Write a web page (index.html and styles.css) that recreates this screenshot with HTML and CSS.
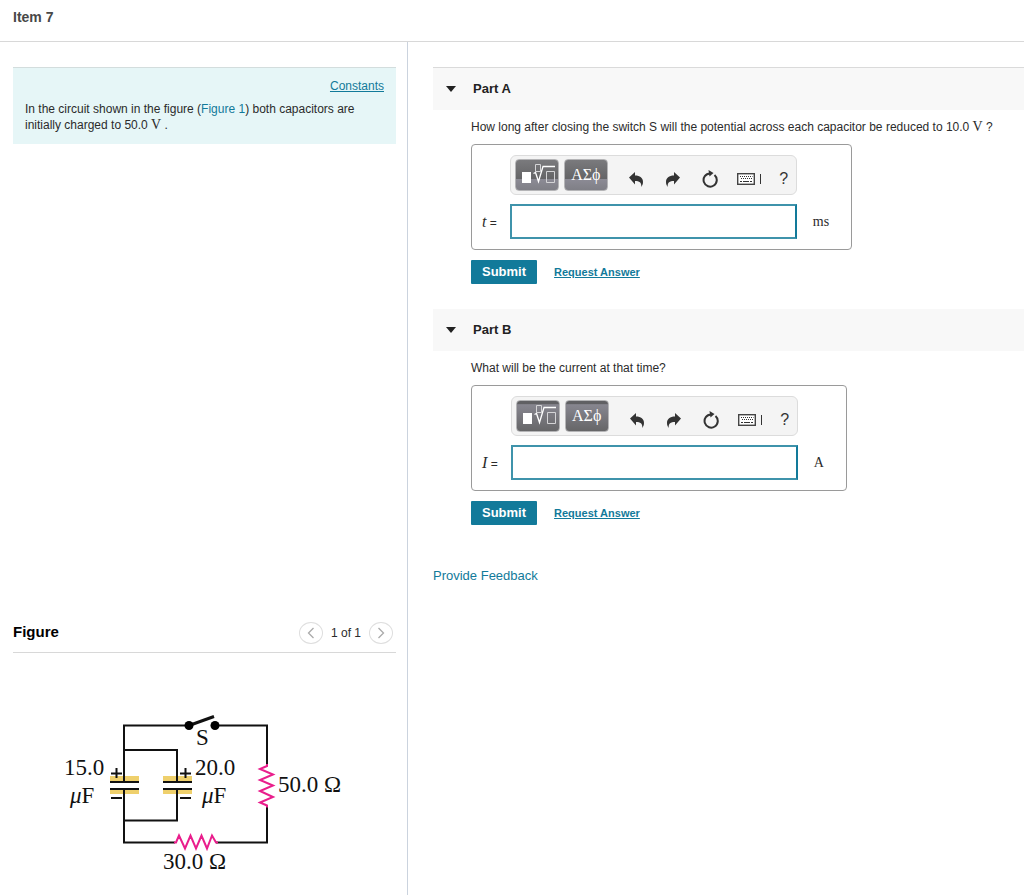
FILE: index.html
```html
<!DOCTYPE html>
<html lang="en">
<head>
<meta charset="utf-8">
<meta name="viewport" content="width=device-width, initial-scale=1">
<title>Item 7</title>
<link rel="stylesheet" href="styles.css">
</head>
<body>
<svg class="sprite" aria-hidden="true">
  <symbol id="i-template" viewBox="1 1 42 30">
    <path d="M7 13h9v11h-9z" fill="#fff"/>
    <path d="M20.500 5.500h5v7h-5zM31.500 12.500h8v11h-8z" fill="none" stroke="#d4d4d6"/>
    <path d="M18.500 14.500l2-1 3 9 4.500-15h12" fill="none" stroke="#fff" stroke-width="1.300"/>
  </symbol>
  <symbol id="i-undo" viewBox="0 0 14 16">
    <path d="M0 6.500L6 1v3.500c5 0 8 2.500 8 6.500 0 2-.7 3.500-1.700 5 .4-4.500-2-6-6.300-6v3.500z" fill="#333"/>
  </symbol>
  <symbol id="i-redo" viewBox="0 0 14 16">
    <path d="M14 6.500L8 1v3.500c-5 0-8 2.500-8 6.500 0 2 .7 3.500 1.700 5-.4-4.500 2-6 6.300-6v3.500z" fill="#333"/>
  </symbol>
  <symbol id="i-reset" viewBox="0 0 16 18">
    <path d="M12.500 5A6.600 6.600 0 1 1 8 3.400" fill="none" stroke="#333" stroke-width="2"/>
    <path d="M6.500 0l5 3-4 3.500z" fill="#333"/>
  </symbol>
  <symbol id="i-keyboard" viewBox="0 0 26 12">
    <rect x=".7" y=".7" width="16.600" height="10.600" fill="#fff" stroke="#444" stroke-width="1.400"/>
    <path d="M3 3.500h12.500M4 5.500h11.500" stroke="#333" stroke-dasharray="1 1"/>
    <path d="M3 8.500h2M6 8.500h6M13 8.500h2" stroke="#333"/>
    <path d="M23.500 1v10" stroke="#333"/>
  </symbol>
</svg>

<header class="topbar"><h1 class="topbar-title">Item 7</h1></header>

<main class="columns">
  <div class="left">
    <section class="problem">
      <p class="constants"><a href="#constants">Constants</a></p>
      <p class="problem-text">In the circuit shown in the figure (<a class="plain" href="#figure">Figure 1</a>) both capacitors are initially charged to 50.0 <span class="math">V</span> .</p>
    </section>

    <section class="figure" id="figure">
      <div class="figure-head">
        <h2 class="figure-title">Figure</h2>
        <div class="pager">
          <button class="round" type="button" aria-label="Previous figure"><svg width="8" height="12" viewBox="0 0 8 12"><path d="M6.500 1L1.500 6l5 5" fill="none" stroke="#aaa" stroke-width="1.300"/></svg></button>
          <span>1 of 1</span>
          <button class="round" type="button" aria-label="Next figure"><svg width="8" height="12" viewBox="0 0 8 12"><path d="M1.500 1l5 5-5 5" fill="none" stroke="#aaa" stroke-width="1.300"/></svg></button>
        </div>
      </div>
      <svg class="circuit" width="300" height="170" viewBox="60 710 300 170" role="img" aria-label="Circuit with two capacitors, two resistors and a switch">
        <g fill="#efd06c">
          <path d="M110 776h29v6h-29zM110 789h29v5h-29zM163 776h29v6h-29zM163 789h29v5h-29z"/>
        </g>
        <g fill="none" stroke="#111" stroke-width="2">
          <path d="M189 725.500h-65V782M124 750h53v32M124 789v53.500h51M177 789v31.500h-53M215 725.500h52V765M267 807v35.500h-51"/>
          <path d="M110 782h29M110 789h29M163 782h29M163 789h29"/>
          <path d="M111 773.500h11M116.500 768v10M111 798h11M180 773.500h11M185.500 768v10M180 798h11"/>
          <path d="M189 725.500l25-9" stroke-width="3"/>
        </g>
        <g fill="#000"><circle cx="189" cy="725.500" r="4.500"/><circle cx="215" cy="725.500" r="4.500"/></g>
        <g fill="none" stroke="#e91e8c" stroke-width="2">
          <path d="M267 764v2l-7 3 13 5.500-13 5.500 13 5.500-13 5.500 13 6-13 5.500 7 3v2"/>
          <path d="M174 842.500h2l3-7 6 13 5.500-13 5.500 13 5.500-13 5.500 13 5-13 4 7h2"/>
        </g>
        <g class="circuit-text">
          <text x="196" y="745">S</text>
          <text x="64" y="775">15.0</text>
          <text x="70" y="803"><tspan class="mu">μ</tspan>F</text>
          <text x="195" y="775">20.0</text>
          <text x="202" y="803"><tspan class="mu">μ</tspan>F</text>
          <text x="278" y="792">50.0 Ω</text>
          <text x="163" y="869">30.0 Ω</text>
        </g>
      </svg>
    </section>
  </div>

  <div class="right">
    <section class="part">
      <h2 class="part-head part-head-first"><button class="toggle" type="button" aria-expanded="true"><span class="caret"></span>Part A</button></h2>
      <form class="part-body">
        <p class="question">How long after closing the switch S will the potential across each capacitor be reduced to 10.0 <span class="math">V</span> ?</p>
        <div class="answer">
          <div class="toolbar">
            <button class="dark" type="button" aria-label="Templates"><svg width="42" height="30"><use href="#i-template"/></svg></button>
            <button class="dark" type="button">ΑΣϕ</button>
            <span class="tools">
              <button class="tool" type="button" aria-label="Undo"><svg width="14" height="16"><use href="#i-undo"/></svg></button>
              <button class="tool" type="button" aria-label="Redo"><svg width="14" height="16"><use href="#i-redo"/></svg></button>
              <button class="tool" type="button" aria-label="Reset"><svg width="16" height="18"><use href="#i-reset"/></svg></button>
              <button class="tool tool-wide" type="button" aria-label="Keyboard shortcuts"><svg width="26" height="12"><use href="#i-keyboard"/></svg></button>
              <button class="tool tool-help" type="button">?</button>
            </span>
          </div>
          <label class="symbol" for="answer-a"><i>t</i> =</label>
          <input class="field" id="answer-a" type="text">
          <span class="unit">ms</span>
        </div>
        <div class="actions"><button class="submit" type="submit">Submit</button><a class="request" href="#answer-a">Request Answer</a></div>
      </form>
    </section>

    <section class="part">
      <h2 class="part-head"><button class="toggle" type="button" aria-expanded="true"><span class="caret"></span>Part B</button></h2>
      <form class="part-body">
        <p class="question">What will be the current at that time?</p>
        <div class="answer">
          <div class="toolbar">
            <button class="dark dark-alt" type="button" aria-label="Templates"><svg width="42" height="30"><use href="#i-template"/></svg></button>
            <button class="dark dark-alt" type="button">ΑΣϕ</button>
            <span class="tools">
              <button class="tool" type="button" aria-label="Undo"><svg width="14" height="16"><use href="#i-undo"/></svg></button>
              <button class="tool" type="button" aria-label="Redo"><svg width="14" height="16"><use href="#i-redo"/></svg></button>
              <button class="tool" type="button" aria-label="Reset"><svg width="16" height="18"><use href="#i-reset"/></svg></button>
              <button class="tool tool-wide" type="button" aria-label="Keyboard shortcuts"><svg width="26" height="12"><use href="#i-keyboard"/></svg></button>
              <button class="tool tool-help" type="button">?</button>
            </span>
          </div>
          <label class="symbol" for="answer-b"><i>I</i> =</label>
          <input class="field" id="answer-b" type="text">
          <span class="unit">A</span>
        </div>
        <div class="actions"><button class="submit" type="submit">Submit</button><a class="request" href="#answer-b">Request Answer</a></div>
      </form>
    </section>

    <a class="feedback" href="#feedback">Provide Feedback</a>
  </div>
</main>
</body>
</html>
```
FILE: styles.css
```css
* { box-sizing: border-box; }
body {
  margin: 0;
  min-height: 100vh;
  display: flex;
  flex-direction: column;
  background: #fff;
  color: #2b2b2b;
  font: 12px/16px "Liberation Sans", Arial, sans-serif;
}
h1, h2, p { margin: 0; }
button { margin: 0; padding: 0; border: 0; background: none; color: inherit; font: inherit; cursor: pointer; }
a { color: #127a9a; }
svg { display: block; }
.sprite { position: absolute; width: 0; height: 0; }
.math { font: 14px/16px "Liberation Serif", serif; }
.plain { text-decoration: none; }

.topbar { padding: 9px 13px 16px; border-bottom: 1px solid #d8d8d8; }
.topbar-title { font-size: 14px; line-height: 16px; color: #484848; }

.columns { flex: 1; display: grid; grid-template-columns: minmax(0, 408fr) minmax(0, 616fr); }
.left {
  display: flex;
  flex-direction: column;
  justify-content: space-between;
  padding: 25px 11px 15px 13px;
  border-right: 1px solid #cbd3de;
}
.problem { padding: 10px 12px 11px; background: #e6f6f7; border-top: 1px solid #d3dddd; }
.constants { margin-bottom: 7px; text-align: right; }
.figure-head {
  display: flex;
  align-items: flex-start;
  justify-content: space-between;
  padding-bottom: 8px;
  border-bottom: 1px solid #d8d8d8;
}
.figure-title { font-size: 15px; line-height: 20px; color: #000; }
.pager { display: flex; align-items: center; gap: 8px; padding-right: 3px; }
.round {
  display: grid;
  place-items: center;
  width: 24px;
  height: 22px;
  border: 1px solid #dedede;
  border-radius: 50%;
}
.circuit { max-width: 100%; margin: 57px 0 0 47px; }
.circuit-text { font: 23px "Liberation Serif", serif; fill: #111; }
.mu { font-style: italic; }

.right { padding: 25px 0 25px 25px; }
.part { margin-bottom: 25px; }
.part-head { background: #f8f8f8; font-size: 13px; line-height: 18px; }
.part-head-first { border-top: 1px solid #dadada; }
.toggle {
  display: flex;
  align-items: center;
  gap: 17px;
  width: 100%;
  padding: 12px 13px;
  font-weight: bold;
  color: #222;
}
.caret { border: 5px solid transparent; border-top: 6px solid #222; border-bottom: 0; }
.part-body { padding: 9px 0 0 38px; }
.question { margin-bottom: 9px; }
.answer {
  display: inline-grid;
  grid-template-columns: auto 287px auto;
  align-items: center;
  row-gap: 9px;
  padding: 10px 22px 10px 10px;
  border: 1px solid #9a9a9a;
  border-radius: 4px;
}
.toolbar {
  grid-column: 2;
  display: flex;
  gap: 5px;
  height: 40px;
  padding: 3px 4px;
  background: #f4f4f4;
  border: 1px solid #dcdcdc;
  border-radius: 6px;
}
.dark {
  flex: none;
  width: 44px;
  height: 32px;
  border: 1px solid #b5b5b7;
  border-radius: 4px;
  background: linear-gradient(#7a7a7d, #656567 62%, #8c8b95 64%, #7f7f86);
  color: #fff;
  font: 16px/26px "Liberation Serif", serif;
  text-align: center;
}
.dark-alt { background: linear-gradient(#606063 10%, #87868f 12%, #666668); }
.tools { display: flex; align-items: center; margin-left: 5px; padding-top: 7px; }
.tool { display: grid; place-items: center; width: 37px; height: 24px; color: #333; }
.tool-wide { width: 43px; }
.tool-help { width: 24px; font-size: 16px; }
.symbol { grid-column: 1; padding-right: 13px; }
.symbol i { font: italic 16px/18px "Liberation Serif", serif; }
.field {
  width: 287px;
  height: 35px;
  padding: 0 8px;
  border: 2px solid #3f93ab;
  border-right-color: #127a9a;
  font: inherit;
  font-size: 14px;
}
.unit { padding-left: 16px; font: 14px/16px "Liberation Serif", serif; }
.actions { display: flex; align-items: center; gap: 17px; margin-top: 10px; }
.submit {
  height: 24px;
  padding: 0 11px 1px;
  background: #127a9a;
  border-radius: 1px;
  color: #fff;
  font-size: 13px;
  font-weight: bold;
}
.request { font-size: 11px; font-weight: bold; }
.feedback { display: inline-block; margin-top: 18px; font-size: 13px; text-decoration: none; }
```
